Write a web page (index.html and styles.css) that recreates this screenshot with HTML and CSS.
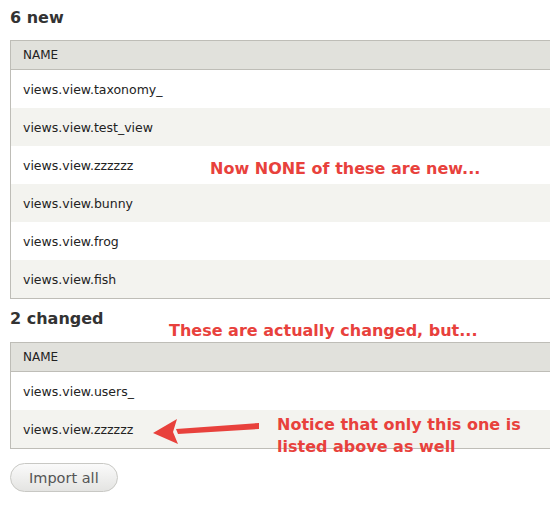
FILE: index.html
```html
<!DOCTYPE html>
<html>
<head>
    <title>Configuration sync</title>
    <link rel="stylesheet" href="styles.css">
</head>
<body>
    <div class="page">
        <h2 class="section-title">6 new</h2>
        <table class="config-table">
            <thead>
                <tr><th>Name</th></tr>
            </thead>
            <tbody>
                <tr><td>views.view.taxonomy_</td></tr>
                <tr><td>views.view.test_view</td></tr>
                <tr><td>views.view.zzzzzz</td></tr>
                <tr><td>views.view.bunny</td></tr>
                <tr><td>views.view.frog</td></tr>
                <tr><td>views.view.fish</td></tr>
            </tbody>
        </table>

        <h2 class="section-title second">2 changed</h2>
        <table class="config-table">
            <thead>
                <tr><th>Name</th></tr>
            </thead>
            <tbody>
                <tr><td>views.view.users_</td></tr>
                <tr><td>views.view.zzzzzz</td></tr>
            </tbody>
        </table>

        <button class="button">Import all</button>

        <!-- annotations drawn over the screenshot -->
        <div class="note note-new">Now NONE of these are new...</div>
        <div class="note note-changed">These are actually changed, but...</div>
        <div class="note note-notice">Notice that only this one is<br>listed above as well</div>
        <svg class="arrow" width="120" height="40" viewBox="0 0 120 40">
            <path d="M109 13 L109 19 L28 24 L26 19 Z" fill="#e8413c"/>
            <path d="M3 23 L27 9 L23 22 L28 34 Z" fill="#e8413c"/>
        </svg>
    </div>
</body>
</html>
```

FILE: styles.css
```css
html, body {
    margin: 0;
    padding: 0;
    background: #fff;
    overflow: hidden;
}
body {
    font-family: "DejaVu Sans", Verdana, sans-serif;
    color: #333;
}
.page {
    position: relative;
    padding: 8px 0 0 10px;
    width: 560px;
    height: 507px;
}
.section-title {
    font-size: 16px;
    line-height: 20px;
    font-weight: bold;
    color: #333;
    margin: 0 0 12px;
}
.section-title.second {
    margin-top: 10px;
    margin-bottom: 13px;
}
.config-table {
    width: 560px;
    border-collapse: collapse;
    border: 1px solid #bebdb7;
}
.config-table th {
    background-color: #e1e1dc;
    border-bottom: 1px solid #bebdb7;
    text-align: left;
    text-transform: uppercase;
    font-weight: normal;
    font-size: 12px;
    height: 28px;
    padding: 0 12px;
    color: #222;
}
.config-table td {
    height: 38px;
    padding: 0 12px;
    font-size: 12.5px;
    color: #222;
}
.config-table tbody tr:nth-child(even) td {
    background-color: #f3f3ef;
}
.button {
    margin-top: 14px;
    height: 29px;
    padding: 0 18px;
    border: 1px solid #c8c8c4;
    border-radius: 15px;
    background: linear-gradient(#fafafa, #e4e4e2);
    font-family: "DejaVu Sans", Verdana, sans-serif;
    font-size: 14.5px;
    color: #555;
    cursor: pointer;
}
.note {
    position: absolute;
    color: #e8413c;
    font-weight: bold;
    font-size: 16px;
    line-height: 22px;
    white-space: nowrap;
}
.note-new {
    left: 210px;
    top: 158px;
}
.note-changed {
    left: 169px;
    top: 320px;
}
.note-notice {
    left: 277px;
    top: 414px;
}
.arrow {
    position: absolute;
    left: 150px;
    top: 410px;
}
```
